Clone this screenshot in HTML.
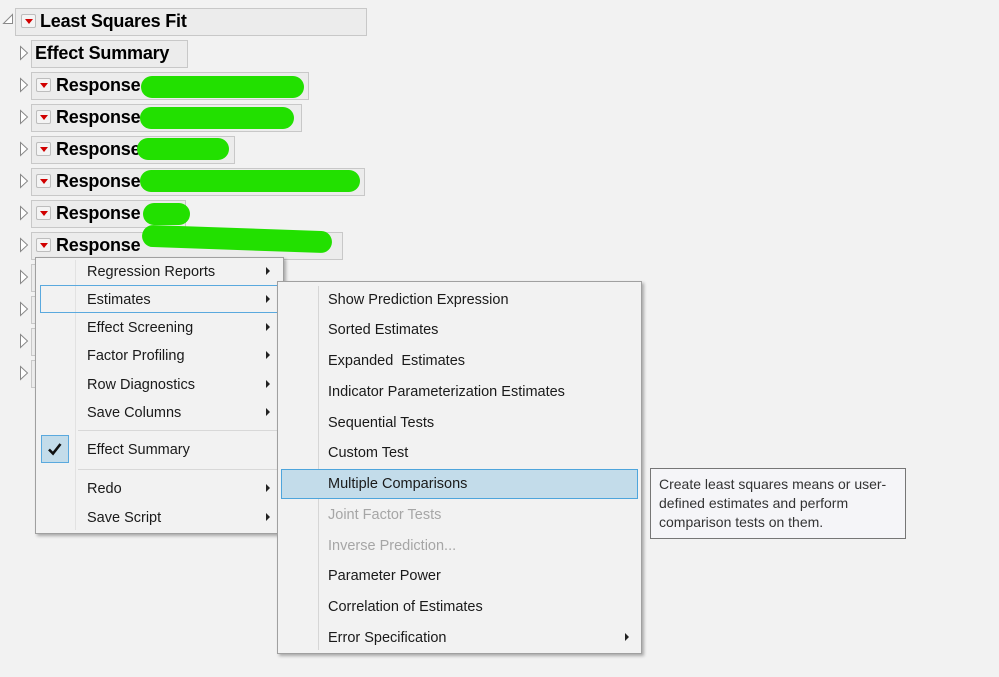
<!DOCTYPE html>
<html><head><meta charset="utf-8">
<style>
*{margin:0;padding:0;box-sizing:border-box}
body{width:999px;height:677px;overflow:hidden;background:#f2f2f2;font-family:"Liberation Sans",sans-serif;position:relative}
.a{position:absolute}
.box{position:absolute;border:1px solid #c8c8c8;background:#ececec}
.hd{position:absolute;font-weight:bold;font-size:18px;color:#000;line-height:20px;letter-spacing:-0.2px}
.btn{position:absolute;width:15px;height:14px;border:1px solid #bdbdbd;border-radius:2px;background:#f4f4f4}
.btn:after{content:"";position:absolute;left:3px;top:4px;border-left:4px solid transparent;border-right:4px solid transparent;border-top:5px solid #d10000}
.tri{position:absolute;width:10px;height:16px}
.g{position:absolute;background:#22e000;border-radius:12px}
.menu{position:absolute;background:#f2f2f2;border:1px solid #a0a0a0;box-shadow:2px 2px 3px rgba(0,0,0,.3)}
.it{position:absolute;font-size:14.5px;color:#1a1a1a;line-height:18px;white-space:nowrap}
.dis{color:#a6a6a6}
.arr{position:absolute;width:0;height:0;border-top:4px solid transparent;border-bottom:4px solid transparent;border-left:4px solid #222}
</style></head><body>
<svg class="a" style="left:2px;top:13px" width="12" height="12"><path d="M1.5 10.5 L10.5 10.5 L10.5 1.5 Z" fill="#fff" stroke="#8a8a8a" stroke-width="1"/></svg>
<div class="box" style="left:15px;top:8px;width:352px;height:28px"></div>
<div class="btn" style="left:21px;top:14px"></div>
<div class="hd" style="left:40px;top:11px">Least Squares Fit</div>

<svg class="tri" style="left:19px;top:45px"><path d="M1.5 1.5 L8.5 8 L1.5 14.5 Z" fill="#fff" stroke="#888"/></svg>
<div class="box" style="left:31px;top:40px;width:157px;height:28px"></div>
<div class="hd" style="left:35px;top:43px">Effect Summary</div>

<svg class="tri" style="left:19px;top:77px"><path d="M1.5 1.5 L8.5 8 L1.5 14.5 Z" fill="#fff" stroke="#888"/></svg><div class="box" style="left:31px;top:72px;width:278px;height:28px"></div><div class="btn" style="left:36px;top:78px"></div><div class="hd" style="left:56px;top:75px">Response</div>
<svg class="tri" style="left:19px;top:109px"><path d="M1.5 1.5 L8.5 8 L1.5 14.5 Z" fill="#fff" stroke="#888"/></svg><div class="box" style="left:31px;top:104px;width:271px;height:28px"></div><div class="btn" style="left:36px;top:110px"></div><div class="hd" style="left:56px;top:107px">Response</div>
<svg class="tri" style="left:19px;top:141px"><path d="M1.5 1.5 L8.5 8 L1.5 14.5 Z" fill="#fff" stroke="#888"/></svg><div class="box" style="left:31px;top:136px;width:204px;height:28px"></div><div class="btn" style="left:36px;top:142px"></div><div class="hd" style="left:56px;top:139px">Response</div>
<svg class="tri" style="left:19px;top:173px"><path d="M1.5 1.5 L8.5 8 L1.5 14.5 Z" fill="#fff" stroke="#888"/></svg><div class="box" style="left:31px;top:168px;width:334px;height:28px"></div><div class="btn" style="left:36px;top:174px"></div><div class="hd" style="left:56px;top:171px">Response</div>
<svg class="tri" style="left:19px;top:205px"><path d="M1.5 1.5 L8.5 8 L1.5 14.5 Z" fill="#fff" stroke="#888"/></svg><div class="box" style="left:31px;top:200px;width:155px;height:28px"></div><div class="btn" style="left:36px;top:206px"></div><div class="hd" style="left:56px;top:203px">Response</div>
<svg class="tri" style="left:19px;top:237px"><path d="M1.5 1.5 L8.5 8 L1.5 14.5 Z" fill="#fff" stroke="#888"/></svg><div class="box" style="left:31px;top:232px;width:312px;height:28px"></div><div class="btn" style="left:36px;top:238px"></div><div class="hd" style="left:56px;top:235px">Response</div>

<svg class="tri" style="left:19px;top:269px"><path d="M1.5 1.5 L8.5 8 L1.5 14.5 Z" fill="#fff" stroke="#888"/></svg><div class="box" style="left:31px;top:264px;width:10px;height:28px"></div>
<svg class="tri" style="left:19px;top:301px"><path d="M1.5 1.5 L8.5 8 L1.5 14.5 Z" fill="#fff" stroke="#888"/></svg><div class="box" style="left:31px;top:296px;width:10px;height:28px"></div>
<svg class="tri" style="left:19px;top:333px"><path d="M1.5 1.5 L8.5 8 L1.5 14.5 Z" fill="#fff" stroke="#888"/></svg><div class="box" style="left:31px;top:328px;width:10px;height:28px"></div>
<svg class="tri" style="left:19px;top:365px"><path d="M1.5 1.5 L8.5 8 L1.5 14.5 Z" fill="#fff" stroke="#888"/></svg><div class="box" style="left:31px;top:360px;width:10px;height:28px"></div>

<div class="g" style="left:141px;top:76px;width:163px;height:22px"></div>
<div class="g" style="left:140px;top:107px;width:154px;height:22px"></div>
<div class="g" style="left:137px;top:138px;width:92px;height:22px;border-radius:11px"></div>
<div class="g" style="left:140px;top:170px;width:220px;height:22px"></div>
<div class="g" style="left:143px;top:203px;width:47px;height:22px"></div>
<div class="g" style="left:142px;top:228px;width:190px;height:22px;transform:rotate(2deg)"></div>

<div class="menu" style="left:35px;top:257px;width:249px;height:277px">
 <div class="a" style="left:39px;top:2px;width:1px;height:270px;background:#e2e2e2"></div>
 <div class="a" style="left:42px;top:172px;width:200px;height:1px;background:#d8d8d8"></div>
 <div class="a" style="left:42px;top:211px;width:200px;height:1px;background:#d8d8d8"></div>
</div>
<div class="a" style="left:40px;top:285px;width:238px;height:28px;border:1px solid #5aa9de"></div>
<div class="a" style="left:41px;top:435px;width:28px;height:28px;border:1px solid #5aa9de;background:#c3dcea"></div>
<svg class="a" style="left:47px;top:441px" width="16" height="16"><path d="M2 8.5 L6 12.5 L13.5 3" fill="none" stroke="#111" stroke-width="2.6"/></svg>
<div class="it" style="left:87px;top:263px">Regression Reports</div><div class="arr" style="left:266px;top:267px"></div>
<div class="it" style="left:87px;top:291px">Estimates</div><div class="arr" style="left:266px;top:295px"></div>
<div class="it" style="left:87px;top:319px">Effect Screening</div><div class="arr" style="left:266px;top:323px"></div>
<div class="it" style="left:87px;top:347px">Factor Profiling</div><div class="arr" style="left:266px;top:351px"></div>
<div class="it" style="left:87px;top:376px">Row Diagnostics</div><div class="arr" style="left:266px;top:380px"></div>
<div class="it" style="left:87px;top:404px">Save Columns</div><div class="arr" style="left:266px;top:408px"></div>
<div class="it" style="left:87px;top:441px">Effect Summary</div>
<div class="it" style="left:87px;top:480px">Redo</div><div class="arr" style="left:266px;top:484px"></div>
<div class="it" style="left:87px;top:509px">Save Script</div><div class="arr" style="left:266px;top:513px"></div>

<div class="menu" style="left:277px;top:281px;width:365px;height:373px">
 <div class="a" style="left:40px;top:4px;width:1px;height:364px;background:#d6d6d6"></div>
</div>
<div class="a" style="left:281px;top:469px;width:357px;height:30px;border:1px solid #4ea5dc;background:#c3dcea"></div>
<div class="it" style="left:328px;top:291px">Show Prediction Expression</div>
<div class="it" style="left:328px;top:321px">Sorted Estimates</div>
<div class="it" style="left:328px;top:352px">Expanded&nbsp; Estimates</div>
<div class="it" style="left:328px;top:383px">Indicator Parameterization Estimates</div>
<div class="it" style="left:328px;top:414px">Sequential Tests</div>
<div class="it" style="left:328px;top:444px">Custom Test</div>
<div class="it" style="left:328px;top:475px">Multiple Comparisons</div>
<div class="it dis" style="left:328px;top:506px">Joint Factor Tests</div>
<div class="it dis" style="left:328px;top:537px">Inverse Prediction...</div>
<div class="it" style="left:328px;top:567px">Parameter Power</div>
<div class="it" style="left:328px;top:598px">Correlation of Estimates</div>
<div class="it" style="left:328px;top:629px">Error Specification</div><div class="arr" style="left:625px;top:633px"></div>

<div class="a" style="left:650px;top:468px;width:256px;height:71px;border:1px solid #767676;background:#f5f5f8;padding:6px 8px;font-size:14px;line-height:19px;color:#333">Create least squares means or user-defined estimates and perform comparison tests on them.</div>
</body></html>
